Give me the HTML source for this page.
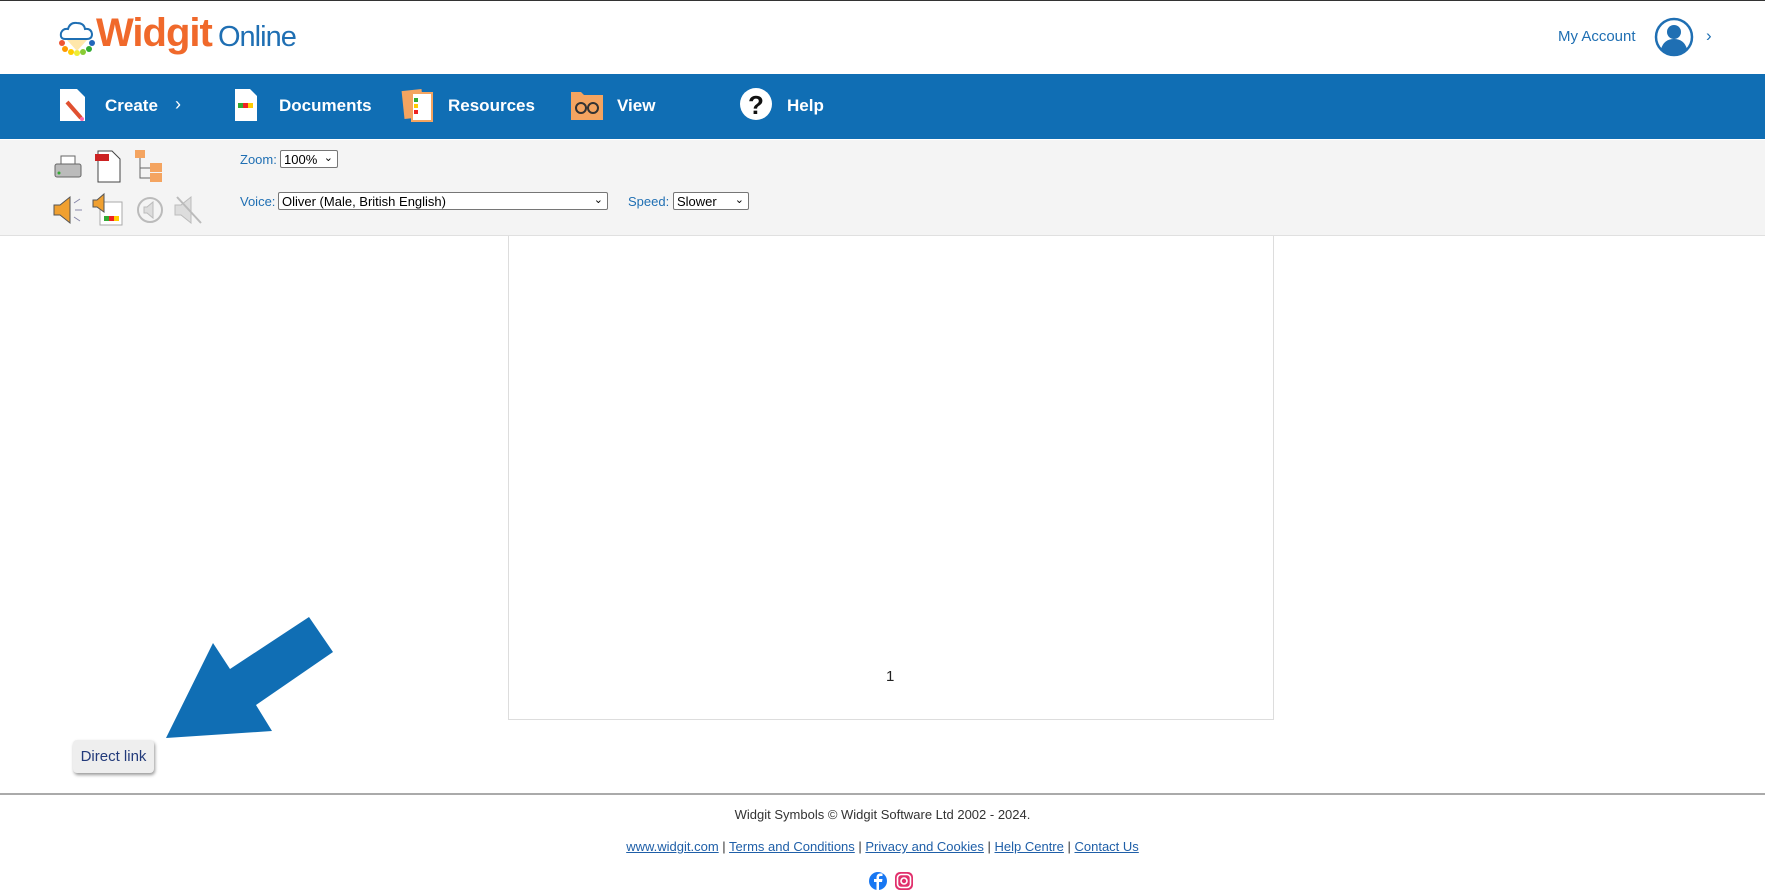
<!DOCTYPE html>
<html><head><meta charset="utf-8"><style>
*{margin:0;padding:0;box-sizing:border-box}
body{width:1765px;height:892px;position:relative;background:#fff;font-family:"Liberation Sans",sans-serif;overflow:hidden;border-top:1px solid #333}
.a{position:absolute}
.nav{top:73px;left:0;width:1765px;height:65px;background:#106eb4}
.nav .t{color:#fff;font-weight:bold;font-size:17px;top:22px}
.tb{top:139px;left:0;width:1765px;height:96px;background:#f4f4f4;border-bottom:1px solid #e0e0e0}
.lbl{color:#1f6fb3;font-size:13px}
.sel{background:#fff;border:1px solid #767676;border-radius:2px;font-size:13px;height:18px;padding:1px 3px;color:#000}
.sel i{position:absolute;right:4px;top:0;font-style:normal;font-size:11px}
.foot a{color:#1f5fa8;text-decoration:underline}
</style></head><body>
<!-- logo -->
<svg class="a" style="left:57px;top:16px" width="40" height="40" viewBox="0 0 40 40">
<path d="M8 22 Q3 22 4 16 Q6 11 11 12 Q13 5 20 6 Q27 6 28 12 Q34 11 35 17 Q35 22 30 22Z" fill="#fff" stroke="#1f6fb3" stroke-width="2"/>
<circle cx="5" cy="26" r="3" fill="#e53"/><circle cx="8" cy="32" r="3" fill="#f90"/><circle cx="14" cy="35" r="3" fill="#fc0"/><circle cx="20" cy="36" r="3" fill="#ee3"/><circle cx="26" cy="35" r="3" fill="#8c3"/><circle cx="32" cy="32" r="3" fill="#3a3"/><circle cx="35" cy="26" r="3" fill="#26b"/>
<path d="M10 23 L20 34 L30 23Z" fill="#fd8" opacity=".7"/>
</svg>
<div class="a" style="left:96px;top:10px;font-size:40px;font-weight:bold;color:#f0692b;letter-spacing:-1px">Widgit</div>
<div class="a" style="left:218px;top:20px;font-size:29px;color:#1f6fb3;letter-spacing:-1px">Online</div>
<div class="a" style="left:1558px;top:27px;font-size:15px;color:#1f6fb3">My Account</div>
<svg class="a" style="left:1654px;top:16px" width="40" height="40" viewBox="0 0 40 40"><circle cx="20" cy="20" r="18" fill="#fff" stroke="#1f6fb3" stroke-width="2.5"/><circle cx="20" cy="15" r="7" fill="#1f6fb3"/><path d="M7 32 Q10 22 20 22 Q30 22 33 32 Q27 38 20 38 Q13 38 7 32Z" fill="#1f6fb3"/></svg>
<div class="a" style="left:1706px;top:25px;font-size:17px;color:#1f6fb3">›</div>
<div class="a nav">
<svg class="a" style="left:59px;top:14px" width="28" height="34"><path d="M1 1 H18 L26 9 V33 H1Z" fill="#fff"/><path d="M8 14 L22 30" stroke="#e05030" stroke-width="4"/><circle cx="23" cy="31" r="2" fill="#f6a"/></svg>
<div class="a t" style="left:105px">Create</div><div class="a" style="left:175px;top:20px;color:#fff;font-size:18px">›</div>
<svg class="a" style="left:234px;top:14px" width="24" height="34"><path d="M1 1 H16 L23 8 V33 H1Z" fill="#fff"/><rect x="4" y="15" width="5" height="5" fill="#3a3"/><rect x="9" y="15" width="5" height="5" fill="#e22"/><rect x="14" y="15" width="5" height="5" fill="#fc0"/></svg>
<div class="a t" style="left:279px">Documents</div>
<svg class="a" style="left:401px;top:14px" width="34" height="34"><rect x="2" y="2" width="20" height="28" fill="#f4a460" transform="rotate(-6 12 16)"/><rect x="11" y="5" width="20" height="28" fill="#fff" stroke="#f4a460" stroke-width="2"/><rect x="13" y="10" width="4" height="4" fill="#3a3"/><rect x="13" y="16" width="4" height="4" fill="#fc0"/><rect x="13" y="22" width="4" height="4" fill="#e22"/></svg>
<div class="a t" style="left:448px">Resources</div>
<svg class="a" style="left:571px;top:16px" width="32" height="30"><path d="M0 2 H10 L13 5 H32 V30 H0Z" fill="#f4a460"/><circle cx="10" cy="18" r="5" fill="none" stroke="#333" stroke-width="2"/><circle cx="22" cy="18" r="5" fill="none" stroke="#333" stroke-width="2"/></svg>
<div class="a t" style="left:617px">View</div>
<svg class="a" style="left:739px;top:13px" width="34" height="34"><circle cx="17" cy="17" r="16" fill="#fff"/><text x="17" y="27" text-anchor="middle" font-family="Liberation Sans" font-weight="bold" font-size="26" fill="#111">?</text></svg>
<div class="a t" style="left:787px">Help</div>
</div>
<div class="a tb">
<svg class="a" style="left:54px;top:14px" width="28" height="26"><rect x="7" y="2" width="14" height="10" fill="#fff" stroke="#666"/><rect x="1" y="10" width="26" height="13" rx="2" fill="#bbb" stroke="#666"/><circle cx="5" cy="19" r="1.5" fill="#3a3"/></svg>
<svg class="a" style="left:94px;top:9px" width="28" height="34"><path d="M4 2 H18 L26 10 V33 H4Z" fill="#fff" stroke="#444"/><rect x="1" y="5" width="14" height="7" fill="#c22"/></svg>
<svg class="a" style="left:134px;top:9px" width="32" height="34"><rect x="1" y="1" width="10" height="8" fill="#f4a460"/><path d="M6 9 V29 H18 M6 19 H18" stroke="#666" fill="none"/><rect x="16" y="14" width="12" height="9" fill="#f4a460"/><rect x="16" y="24" width="12" height="9" fill="#f4a460"/></svg>
<svg class="a" style="left:52px;top:55px" width="32" height="30"><path d="M2 10 H8 L18 2 V28 L8 20 H2Z" fill="#f0a030" stroke="#555"/><path d="M22 8 L28 4 M23 15 H30 M22 22 L28 26" stroke="#88a" /></svg>
<svg class="a" style="left:92px;top:52px" width="32" height="34"><path d="M8 10 H30 V33 H8Z" fill="#fff" stroke="#aaa"/><path d="M1 8 H5 L12 2 V20 L5 15 H1Z" fill="#f0a030" stroke="#555"/><rect x="12" y="24" width="5" height="5" fill="#3a3"/><rect x="17" y="24" width="5" height="5" fill="#e22"/><rect x="22" y="24" width="5" height="5" fill="#fc0"/></svg>
<svg class="a" style="left:134px;top:55px" width="32" height="30"><circle cx="16" cy="15" r="12" fill="none" stroke="#bbb" stroke-width="2"/><path d="M10 12 H13 L19 7 V23 L13 18 H10Z" fill="#ddd" stroke="#bbb"/></svg>
<svg class="a" style="left:173px;top:55px" width="32" height="30"><path d="M2 10 H8 L18 2 V28 L8 20 H2Z" fill="#ddd" stroke="#bbb"/><path d="M4 2 L28 28" stroke="#bbb" stroke-width="2"/></svg>
<div class="a lbl" style="left:240px;top:12px">Zoom:</div>
<div class="a sel" style="left:280px;top:10px;width:58px">100%<i>⌄</i></div>
<div class="a lbl" style="left:240px;top:54px">Voice:</div>
<div class="a sel" style="left:278px;top:52px;width:330px">Oliver (Male, British English)<i>⌄</i></div>
<div class="a lbl" style="left:628px;top:54px">Speed:</div>
<div class="a sel" style="left:673px;top:52px;width:76px">Slower<i>⌄</i></div>
</div>
<div class="a" style="left:508px;top:235px;width:766px;height:484px;border:1px solid #ddd;border-top:none"></div>
<div class="a" style="left:886px;top:667px;font-size:15px;color:#222">1</div>
<svg class="a" style="left:0;top:600px" width="400" height="160"><polygon points="166,137 272,130 256,104 333,51 309,16 230,68 213,42" fill="#106eb4"/></svg>
<div class="a" style="left:73px;top:739px;width:81px;height:33px;background:#eee;border-radius:4px;box-shadow:1px 2px 3px #999;color:#223a7a;font-size:15px;line-height:33px;text-align:center">Direct link</div>
<div class="a" style="left:0;top:792px;width:1765px;height:2px;background:#aaa"></div>
<div class="a foot" style="left:0;top:806px;width:1765px;text-align:center;font-size:13px;color:#333">Widgit Symbols © Widgit Software Ltd 2002 - 2024.</div>
<div class="a foot" style="left:0;top:838px;width:1765px;text-align:center;font-size:13px;color:#333"><a>www.widgit.com</a> | <a>Terms and Conditions</a> | <a>Privacy and Cookies</a> | <a>Help Centre</a> | <a>Contact Us</a></div>
<svg class="a" style="left:869px;top:870px" width="44" height="20"><circle cx="9" cy="10" r="9" fill="#1877f2"/><path d="M10 19 V11 H13 L13.5 8 H10 V6.5 Q10 5 11.5 5 H13.5 V2.5 Q8 1.5 7.5 6 V8 H5 V11 H7.5 V19Z" fill="#fff"/><rect x="26" y="1" width="18" height="18" rx="5" fill="#e1306c"/><rect x="28.5" y="3.5" width="13" height="13" rx="3.5" fill="none" stroke="#fff" stroke-width="1.6"/><circle cx="35" cy="10" r="3" fill="none" stroke="#fff" stroke-width="1.6"/></svg>
</body></html>
